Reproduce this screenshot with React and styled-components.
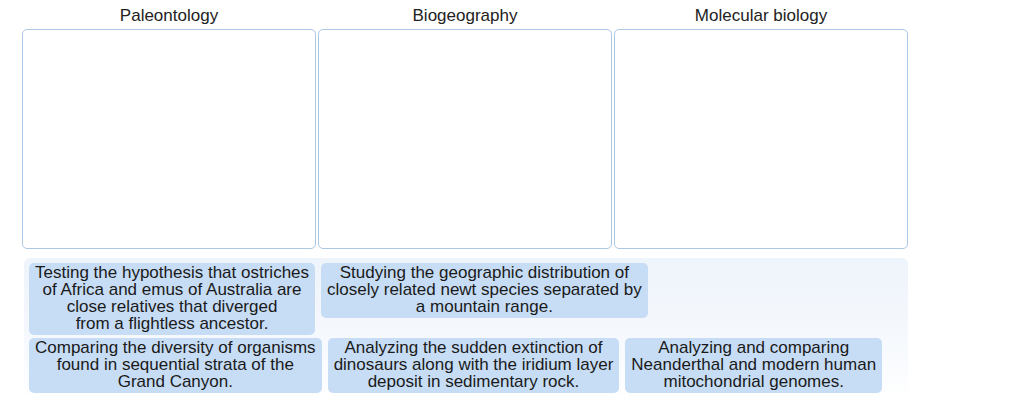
import React from "react";
import styled, { createGlobalStyle } from "styled-components";

const GlobalStyle = createGlobalStyle`
  body {
    margin: 0;
    background: #ffffff;
    font-family: "Liberation Sans", Arial, sans-serif;
    color: #1a1a1a;
  }
`;

const columns = ["Paleontology", "Biogeography", "Molecular biology"];

const rows = [
  [
    [
      "Testing the hypothesis that ostriches",
      "of Africa and emus of Australia are",
      "close relatives that diverged",
      "from a flightless ancestor.",
    ],
    [
      "Studying the geographic distribution of",
      "closely related newt species separated by",
      "a mountain range.",
    ],
  ],
  [
    [
      "Comparing the diversity of organisms",
      "found in sequential strata of the",
      "Grand Canyon.",
    ],
    [
      "Analyzing the sudden extinction of",
      "dinosaurs along with the iridium layer",
      "deposit in sedimentary rock.",
    ],
    [
      "Analyzing and comparing",
      "Neanderthal and modern human",
      "mitochondrial genomes.",
    ],
  ],
];

const App = () => {
  return (
    <>
      <GlobalStyle />
      <Page>
        <Columns>
          {columns.map((name) => (
            <Column key={name}>
              <Heading>{name}</Heading>
              <DropZone />
            </Column>
          ))}
        </Columns>
        <Pool>
          {rows.map((row, i) => (
            <TileRow key={i}>
              {row.map((lines, j) => (
                <Tile key={j}>
                  {lines.map((line, k) => (
                    <Line key={k}>{line}</Line>
                  ))}
                </Tile>
              ))}
            </TileRow>
          ))}
        </Pool>
      </Page>
    </>
  );
};

const Page = styled.div`
  width: 1024px;
  height: 412px;
  padding: 5px 0 0 22px;
  box-sizing: border-box;
`;

const Columns = styled.div`
  display: flex;
  gap: 2px;
`;

const Column = styled.div`
  display: flex;
  flex-direction: column;
  width: 294px;
`;

const Heading = styled.div`
  height: 24px;
  font-size: 17px;
  line-height: 22px;
  text-align: center;
  color: #222;
`;

const DropZone = styled.div`
  height: 220px;
  box-sizing: border-box;
  border: 1px solid #abc9e6;
  border-radius: 5px;
  background: #ffffff;
`;

const Pool = styled.div`
  margin: 9px 0 0 2px;
  width: 884px;
  height: 142px;
  box-sizing: border-box;
  padding: 5px;
  border-radius: 6px;
  background: linear-gradient(to bottom, #eef4fb 0%, #f6f9fd 60%, #ffffff 100%);
  display: flex;
  flex-direction: column;
  gap: 3px;
`;

const TileRow = styled.div`
  display: flex;
  align-items: flex-start;
  gap: 6px;
`;

const Tile = styled.div`
  background: #c7ddf5;
  border-radius: 5px;
  padding: 1px 6px 3px;
  text-align: center;
  font-size: 17px;
  line-height: 17px;
  color: #1a1a1a;
`;

const Line = styled.div`
  white-space: nowrap;
`;

export default App;
